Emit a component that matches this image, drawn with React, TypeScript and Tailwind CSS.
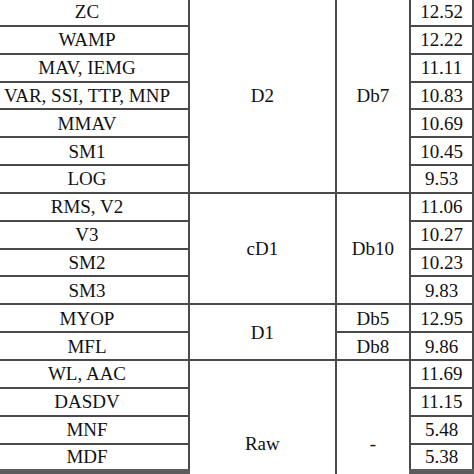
type Row = {
  feature: string;
  value: string;
  level?: { name: string; span: number };
  wavelet?: { name: string; span: number }[];
};

// levels and wavelets span several feature rows
const rows: Row[] = [
  { feature: 'ZC', value: '12.52', level: { name: 'D2', span: 7 }, wavelet: [{ name: 'Db7', span: 7 }] },
  { feature: 'WAMP', value: '12.22' },
  { feature: 'MAV, IEMG', value: '11.11' },
  { feature: 'VAR, SSI, TTP, MNP', value: '10.83' },
  { feature: 'MMAV', value: '10.69' },
  { feature: 'SM1', value: '10.45' },
  { feature: 'LOG', value: '9.53' },
  { feature: 'RMS, V2', value: '11.06', level: { name: 'cD1', span: 4 }, wavelet: [{ name: 'Db10', span: 4 }] },
  { feature: 'V3', value: '10.27' },
  { feature: 'SM2', value: '10.23' },
  { feature: 'SM3', value: '9.83' },
  { feature: 'MYOP', value: '12.95', level: { name: 'D1', span: 2 }, wavelet: [{ name: 'Db5', span: 1 }] },
  { feature: 'MFL', value: '9.86', wavelet: [{ name: 'Db8', span: 1 }] },
  { feature: 'WL, AAC', value: '11.69', level: { name: 'Raw', span: 6 }, wavelet: [{ name: '-', span: 6 }] },
  { feature: 'DASDV', value: '11.15' },
  { feature: 'MNF', value: '5.48' },
  { feature: 'MDF', value: '5.38' },
  { feature: 'PKF', value: '5.20' },
  { feature: 'TTP', value: '5.11' },
];

const cell = 'border-2 border-[#4a4a4a] h-[27.85px] p-0 text-center align-middle whitespace-nowrap';
const cut = 'border-t-[5px] border-t-[#5c5c5c]';

export default function App() {
  return (
    <div className="w-[474px] h-[474px] overflow-hidden bg-white">
      <div className="-mt-[3px] -ml-[16px]">
        <table className="table-fixed border-collapse text-[19px] leading-none text-[#111] font-['Liberation_Serif','Times_New_Roman',serif]">
          <colgroup>
            <col className="w-[206px]" />
            <col className="w-[153px]" />
            <col className="w-[76px]" />
            <col className="w-[64px]" />
          </colgroup>
          <tbody>
            {rows.map((r, i) => (
              <tr key={r.feature + i}>
                <td className={`${cell} ${i === 17 ? cut : ''}`}>{r.feature}</td>
                {r.level && (
                  <td rowSpan={r.level.span} className={cell}>
                    {r.level.name}
                  </td>
                )}
                {r.wavelet?.map(w => (
                  <td key={w.name} rowSpan={w.span} className={cell}>
                    {w.name}
                  </td>
                ))}
                <td className={`${cell} ${i === 17 ? cut : ''}`}>{r.value}</td>
              </tr>
            ))}
          </tbody>
        </table>
      </div>
    </div>
  );
}
